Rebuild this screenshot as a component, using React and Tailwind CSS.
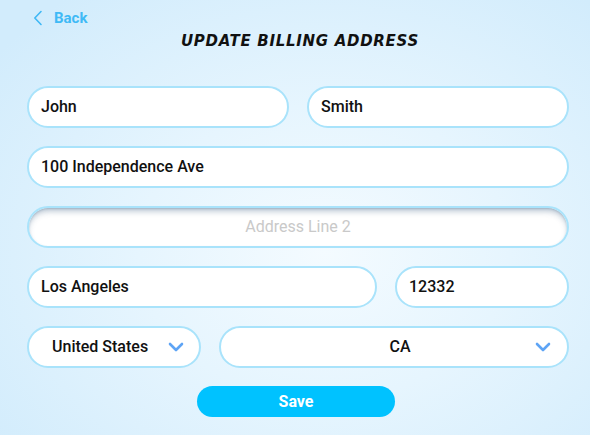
import React from "react";

function Chevron() {
  return (
    <svg width="16" height="10" viewBox="0 0 16 10" fill="none">
      <path d="M2 2l6 6 6-6" stroke="#5ea4f5" strokeWidth="2.6" strokeLinecap="round" strokeLinejoin="round" />
    </svg>
  );
}

const field =
  "h-[42px] rounded-full border-2 border-[#a9e3fb] bg-white flex items-center px-[12px] text-[16px] font-medium text-[#111]";

export default function App() {
  return (
    <div
      className="w-[590px] h-[435px] overflow-hidden"
      style={{
        background:
          "radial-gradient(ellipse 70% 75% at 55% 58%, #f4fbff 0%, #e6f5fe 45%, #d2ecfc 100%)",
        fontFamily: "Roboto, 'Liberation Sans', sans-serif",
      }}
    >
      <div className="pl-[27px] pr-[21px] pt-[9px]">
        <div className="flex items-center h-[18px] gap-[11px] pl-[6px]">
          <svg width="10" height="16" viewBox="0 0 10 16" fill="none">
            <path d="M8 1.5L1.8 8 8 14.5" stroke="#3fb8f5" strokeWidth="1.6" strokeLinecap="round" strokeLinejoin="round" />
          </svg>
          <span className="text-[15px] font-bold text-[#3fbaf6]">Back</span>
        </div>
        <div
          className="text-center text-[15px] font-bold italic tracking-[0.7px] text-[#111] mt-[6px] h-[16px] leading-[16px] pl-[4px]"
          style={{ fontFamily: "'DejaVu Sans', sans-serif" }}
        >
          UPDATE BILLING ADDRESS
        </div>
        <div className="mt-[37px] flex flex-col gap-[18px]">
          <div className="flex gap-[18px]">
            <div className={field + " flex-1"}>John</div>
            <div className={field + " flex-1"}>Smith</div>
          </div>
          <div className={field}>100 Independence Ave</div>
          <div
            className={field + " justify-center text-[#c9c9c9] font-normal"}
            style={{ boxShadow: "inset 0 5px 6px -2px rgba(40,80,120,0.35), inset 0 1px 2px rgba(40,80,120,0.2)" }}
          >
            Address Line 2
          </div>
          <div className="flex gap-[18px]">
            <div className={field + " w-[350px]"}>Los Angeles</div>
            <div className={field + " flex-1"}>12332</div>
          </div>
          <div className="flex gap-[18px]">
            <div className={field + " w-[174px] justify-between pl-[23px] pr-[15px]"}>
              <span>United States</span>
              <Chevron />
            </div>
            <div className={field + " flex-1 relative justify-center pr-[15px]"}>
              <span className="pl-[15px]">CA</span>
              <span className="absolute right-[16px] top-1/2 -translate-y-1/2 flex"><Chevron /></span>
            </div>
          </div>
        </div>
        <div className="flex justify-center mt-[18px] pr-[4px]">
          <button className="w-[198px] h-[31px] rounded-full bg-[#00c2ff] text-white font-bold text-[16px]">
            Save
          </button>
        </div>
      </div>
    </div>
  );
}
